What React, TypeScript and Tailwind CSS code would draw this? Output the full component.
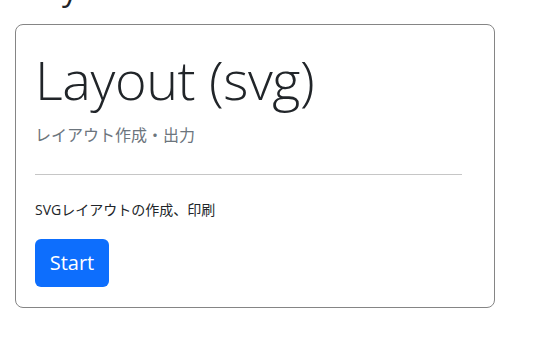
import React from "react";

export default function App() {
  return (
    <div
      className="min-h-[340px] w-[537px] bg-white pl-[15px] text-[#212529]"
      style={{ fontFamily: '"Open Sans", "Noto Sans CJK JP", sans-serif' }}
    >
      <div className="h-[24px] overflow-hidden">
        <h2 className="-mt-[31px] ml-[47px] text-[32px] font-medium leading-[38px]">y</h2>
      </div>
      <div className="w-[480px] rounded-[8px] border border-[#858585] pl-[19px] pr-[32px] pt-[22px] pb-[20px]">
        <h1 className="text-[54px] font-light leading-[1.2] tracking-[-0.4px] text-[#212529]">Layout (svg)</h1>
        <p className="mt-[11px] text-[16px] leading-[24px] text-[#6c757d]">レイアウト作成・出力</p>
        <hr className="mt-[27px] border-t border-[#c6c6c6]" />
        <p className="mt-[24px] text-[14px] leading-[21px]">SVGレイアウトの作成、印刷</p>
        <button className="mt-[19px] flex h-[48px] w-[74px] items-center justify-center rounded-[6px] bg-[#0d6efd] text-[20px] leading-[30px] text-white">
          Start
        </button>
      </div>
    </div>
  );
}
